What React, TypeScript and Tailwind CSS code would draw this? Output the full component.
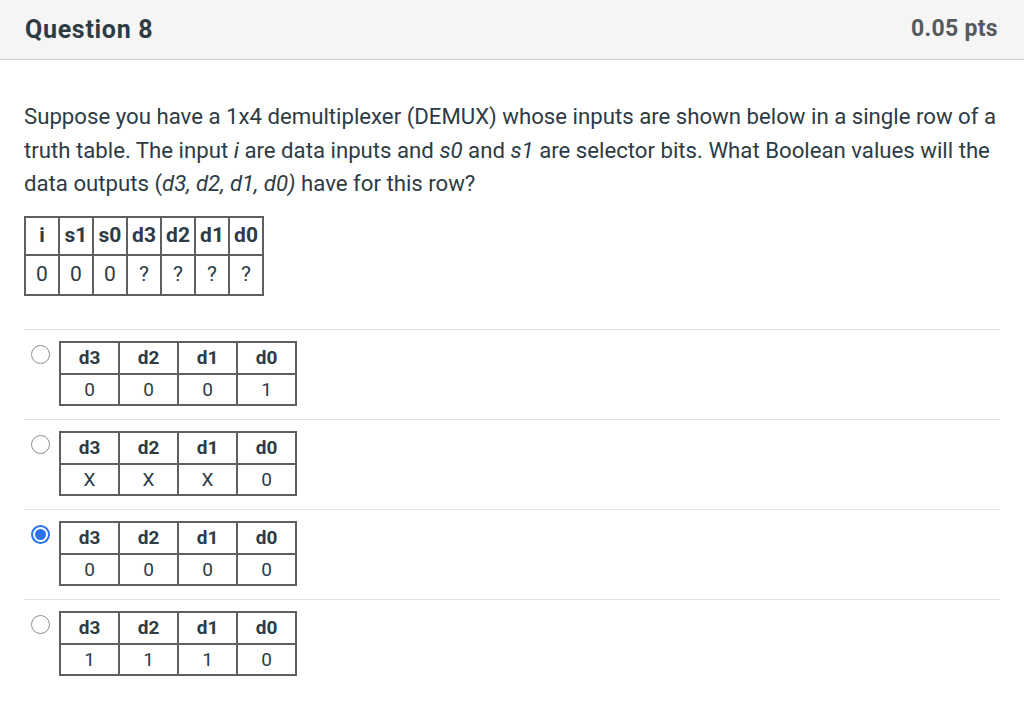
import React from "react";

const font = { fontFamily: "Roboto, 'Liberation Sans', sans-serif" };

type Opt = { vals: string[]; selected?: boolean };

const options: Opt[] = [
  { vals: ["0", "0", "0", "1"] },
  { vals: ["X", "X", "X", "0"] },
  { vals: ["0", "0", "0", "0"], selected: true },
  { vals: ["1", "1", "1", "0"] },
];

function Radio({ selected }: { selected?: boolean }) {
  if (selected) {
    return (
      <div className="w-[19px] h-[19px] rounded-full border-[2px] border-[#2b72f0] flex items-center justify-center bg-white">
        <div className="w-[11px] h-[11px] rounded-full bg-[#2b72f0]" />
      </div>
    );
  }
  return <div className="w-[19px] h-[19px] rounded-full border-[1.5px] border-[#8a8f94] bg-white" />;
}

export default function App() {
  const heads = ["i", "s1", "s0", "d3", "d2", "d1", "d0"];
  const row = ["0", "0", "0", "?", "?", "?", "?"];
  return (
    <div className="w-[1024px] h-[717px] bg-white text-[#2d3b45] overflow-hidden" style={font}>
      <div className="h-[60px] bg-[#f5f5f5] border-b border-[#c7cdd1] flex items-center justify-between pl-[25px] pr-[26px]">
        <div className="text-[25px] font-bold tracking-[0.7px] text-[#2d3b45]">Question 8</div>
        <div className="text-[23px] font-bold tracking-[0.3px] text-[#555a5e]">0.05 pts</div>
      </div>
      <div className="px-[24px] pt-[40px]">
        <p className="text-[22.2px] leading-[33.5px] text-[#2d3b45]">
          Suppose you have a 1x4 demultiplexer (DEMUX) whose inputs are shown below in a single row of a truth table. The input <i>i</i> are data inputs and <i>s0</i> and <i>s1</i> are selector bits. What Boolean values will the data outputs (<i>d3, d2, d1, d0)</i> have for this row?
        </p>
        <table className="mt-[15px] border-collapse text-[21px]">
          <tbody>
            <tr className="h-[38px]">
              {heads.map((h, i) => (
                <td key={i} className="border-2 border-[#5f5f5f] font-bold text-center px-[3px] w-[34px] leading-none">
                  {h}
                </td>
              ))}
            </tr>
            <tr className="h-[40px]">
              {row.map((h, i) => (
                <td key={i} className="border-2 border-[#5f5f5f] text-center px-[3px] leading-none">
                  {h}
                </td>
              ))}
            </tr>
          </tbody>
        </table>
        <div className="mt-[33px]">
          {options.map((o, k) => (
            <div key={k} className="border-t border-[#dfe2e4] h-[90px] flex items-start pt-[11px]">
              <div className="w-[35px] pt-[4px] pl-[7px]">
                <Radio selected={o.selected} />
              </div>
              <table className="border-collapse text-[19px]">
                <tbody>
                  <tr className="h-[32px]">
                    {["d3", "d2", "d1", "d0"].map((h) => (
                      <td key={h} className="border-2 border-[#5f5f5f] font-bold text-center w-[59px] leading-none">
                        {h}
                      </td>
                    ))}
                  </tr>
                  <tr className="h-[31px]">
                    {o.vals.map((v, i) => (
                      <td key={i} className="border-2 border-[#5f5f5f] text-center w-[59px] leading-none">
                        {v}
                      </td>
                    ))}
                  </tr>
                </tbody>
              </table>
            </div>
          ))}
        </div>
      </div>
    </div>
  );
}
